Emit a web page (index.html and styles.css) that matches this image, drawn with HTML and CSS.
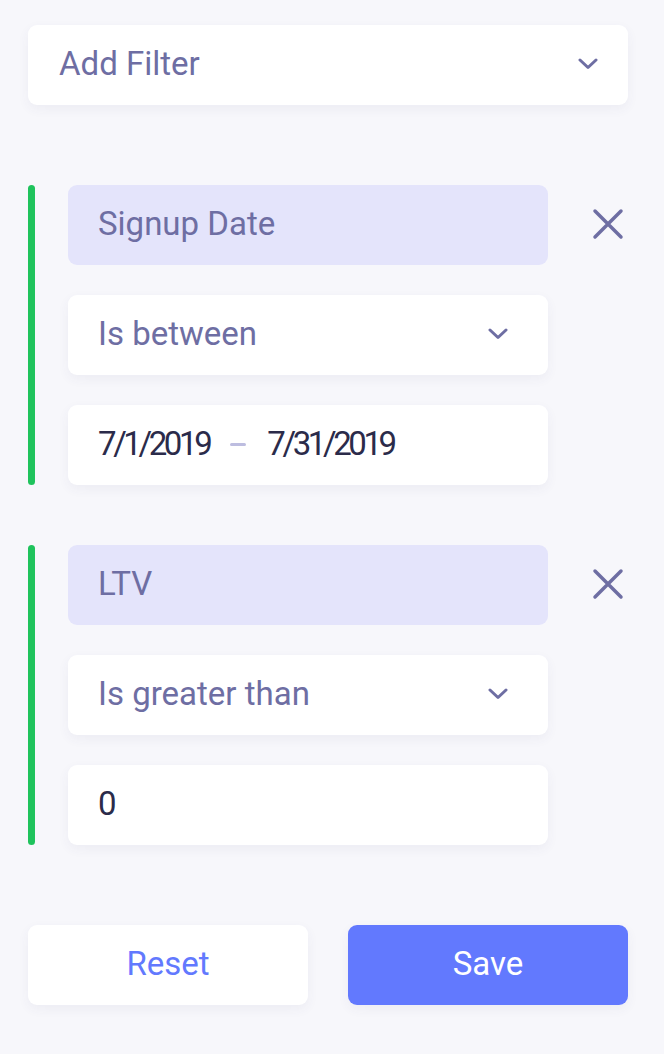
FILE: index.html
```html
<!DOCTYPE html>
<html>
<head>
<meta charset="utf-8">
<link rel="stylesheet" href="styles.css">
</head>
<body>
<div class="panel">
  <div class="field select add">
    <span>Add Filter</span>
    <svg class="chev" width="20" height="12" viewBox="0 0 20 12"><path d="M2 2 L10 9.5 L18 2" fill="none" stroke="#6e6ea3" stroke-width="3" stroke-linecap="round" stroke-linejoin="round"/></svg>
  </div>

  <div class="groups">
    <div class="group">
      <div class="bar"></div>
      <div class="rows">
        <div class="field attr">Signup Date</div>
        <div class="field select"><span>Is between</span>
          <svg class="chev" width="20" height="12" viewBox="0 0 20 12"><path d="M2 2 L10 9.5 L18 2" fill="none" stroke="#6e6ea3" stroke-width="3" stroke-linecap="round" stroke-linejoin="round"/></svg>
        </div>
        <div class="field value"><span class="num">7/1/2019</span><span class="dash"></span><span class="num">7/31/2019</span></div>
      </div>
      <div class="close">
        <svg width="32" height="32" viewBox="0 0 32 32"><path d="M3 3 L29 29 M29 3 L3 29" fill="none" stroke="#6e6ea3" stroke-width="3.5" stroke-linecap="round"/></svg>
      </div>
    </div>

    <div class="group">
      <div class="bar"></div>
      <div class="rows">
        <div class="field attr">LTV</div>
        <div class="field select"><span>Is greater than</span>
          <svg class="chev" width="20" height="12" viewBox="0 0 20 12"><path d="M2 2 L10 9.5 L18 2" fill="none" stroke="#6e6ea3" stroke-width="3" stroke-linecap="round" stroke-linejoin="round"/></svg>
        </div>
        <div class="field value"><span class="num">0</span></div>
      </div>
      <div class="close">
        <svg width="32" height="32" viewBox="0 0 32 32"><path d="M3 3 L29 29 M29 3 L3 29" fill="none" stroke="#6e6ea3" stroke-width="3.5" stroke-linecap="round"/></svg>
      </div>
    </div>
  </div>

  <div class="actions">
    <button class="btn reset">Reset</button>
    <button class="btn save">Save</button>
  </div>
</div>
</body>
</html>
```
FILE: styles.css
```css
html, body {
  margin: 0;
  padding: 0;
  background: #f7f7fb;
}
body {
  font-family: Roboto, "Liberation Sans", sans-serif;
  width: 664px;
  height: 1054px;
}
.panel {
  padding: 25px 36px 0 28px;
}
.field {
  height: 80px;
  box-sizing: border-box;
  border-radius: 9px;
  background: #fff;
  display: flex;
  align-items: center;
  padding: 0 40px 3px 30px;
  font-size: 33px;
  color: #6e6ea3;
  box-shadow: 0 4px 12px rgba(60, 60, 120, 0.06);
}
.add {
  padding-left: 31px;
  padding-right: 30px;
}
.select {
  justify-content: space-between;
}
.groups {
  margin-top: 80px;
  display: flex;
  flex-direction: column;
  gap: 60px;
}
.group {
  display: flex;
}
.bar {
  width: 7px;
  border-radius: 4px;
  background: #1fc35c;
  margin-right: 33px;
}
.rows {
  width: 480px;
  display: flex;
  flex-direction: column;
  gap: 30px;
}
.attr {
  background: #e4e4fb;
  box-shadow: none;
}
.value {
  color: #2b2b4a;
}
.num {
  letter-spacing: -3.4px;
}
.dash {
  display: inline-block;
  width: 16px;
  height: 3px;
  background: #bdbde0;
  border-radius: 2px;
  margin: 2px 21px 0 21px;
}
.close {
  margin-left: 44px;
  margin-top: 23px;
}
.actions {
  margin-top: 80px;
  display: flex;
  gap: 40px;
}
.btn {
  flex: 1;
  height: 80px;
  border: none;
  border-radius: 9px;
  font-family: inherit;
  font-size: 33px;
  padding: 0 0 3px;
  box-shadow: 0 4px 12px rgba(60, 60, 120, 0.06);
}
.reset {
  background: #fff;
  color: #6279fe;
}
.save {
  background: #6279fe;
  color: #fff;
}
```
